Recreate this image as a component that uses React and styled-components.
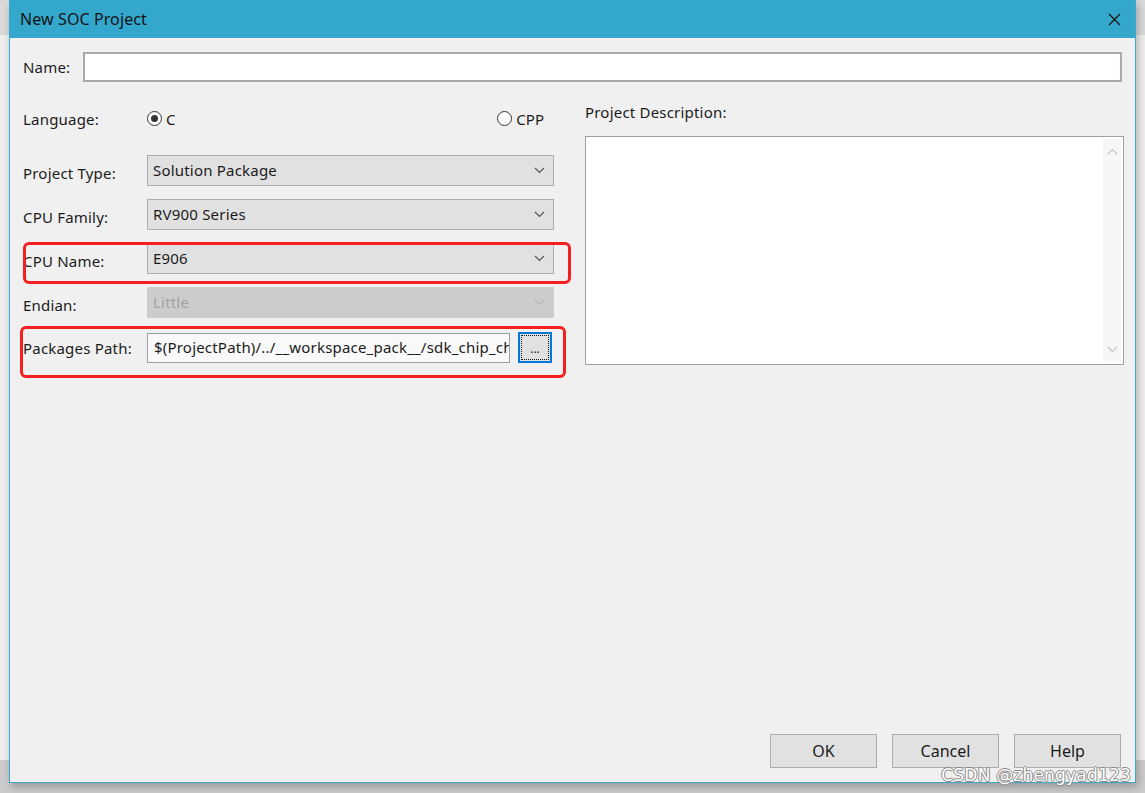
import React from "react";
import styled, { createGlobalStyle } from "styled-components";

const GlobalStyle = createGlobalStyle`
	html, body {
		margin: 0;
		padding: 0;
		background: #efefef;
	}
	body {
		font-family: "Noto Sans", "Open Sans", sans-serif;
		color: #1b1b1b;
	}
`;

// init constant
const selects = [
	{ label: "Project Type:", value: "Solution Package" },
	{ label: "CPU Family:", value: "RV900 Series" },
	{ label: "CPU Name:", value: "E906" },
	{ label: "Endian:", value: "Little", disabled: true },
];

// styled component
const Desktop = styled.div`
	position: relative;
	width: 1145px;
	height: 793px;
	box-sizing: border-box;
	padding: 0 9px 10px 9px;
	background: linear-gradient(
		to bottom,
		#d9d9d9 0,
		#d9d9d9 35px,
		#eeeeee 35px,
		#eeeeee 760px,
		#cbcbcb 760px
	);
	overflow: hidden;
`;

const Dialog = styled.div`
	width: 1127px;
	height: 783px;
	box-sizing: border-box;
	border: 1px solid #3ea8cc;
	border-top: none;
	background: #f0f0f0;
	display: flex;
	flex-direction: column;
	box-shadow: 2px 4px 8px rgba(0, 0, 0, 0.25);
`;

const TitleBar = styled.div`
	height: 38px;
	background: #33a7cc;
	display: flex;
	align-items: center;
	justify-content: space-between;
	padding: 0 14px 0 10px;
	flex-shrink: 0;
`;

const Title = styled.span`
	font-size: 16px;
	letter-spacing: 0.1px;
	color: #141414;
`;

const Body = styled.div`
	flex: 1;
	display: flex;
	flex-direction: column;
	padding: 14px 13px 14px 13px;
`;

const NameRow = styled.div`
	display: flex;
	align-items: center;
	gap: 13px;
	height: 30px;
`;

const Label = styled.span`
	font-size: 15px;
	letter-spacing: 0.2px;
	color: #1b1b1b;
	white-space: nowrap;
	padding-top: ${(p) => p.$shift || 0}px;
`;

const TextInput = styled.div`
	flex: 1;
	height: 30px;
	box-sizing: border-box;
	border: 2px solid #a9a9a9;
	background: #ffffff;
	font-size: 15px;
	letter-spacing: 0.2px;
	display: flex;
	align-items: center;
	padding: 0 5px;
	overflow: hidden;
	white-space: nowrap;
`;

const Columns = styled.div`
	display: flex;
	gap: 31px;
	margin-top: 21px;
`;

const LeftCol = styled.div`
	position: relative;
	width: 531px;
	display: flex;
	flex-direction: column;
	gap: 13px;
`;

const FieldRow = styled.div`
	display: grid;
	grid-template-columns: 124px 1fr;
	align-items: center;
	height: 31px;
	margin-bottom: ${(p) => p.$after || 0}px;
	margin-top: ${(p) => p.$before || 0}px;
`;

const RadioGroup = styled.div`
	display: flex;
	justify-content: space-between;
	align-items: center;
	padding-right: 10px;
`;

const RadioItem = styled.label`
	display: flex;
	align-items: center;
	gap: 4px;
	font-size: 15px;
`;

const RadioCircle = styled.span`
	width: 13px;
	height: 13px;
	border-radius: 50%;
	border: 1px solid #333;
	background: #fff;
	display: flex;
	align-items: center;
	justify-content: center;
	&::after {
		content: "";
		width: 7px;
		height: 7px;
		border-radius: 50%;
		background: ${(p) => (p.$checked ? "#333" : "transparent")};
	}
`;

const Select = styled.div`
	height: 31px;
	box-sizing: border-box;
	border: 1px solid ${(p) => (p.$disabled ? "#cccccc" : "#adadad")};
	background: ${(p) => (p.$disabled ? "#cccccc" : "#e1e1e1")};
	color: ${(p) => (p.$disabled ? "#a3a3a3" : "#1b1b1b")};
	font-size: 15px;
	letter-spacing: 0.2px;
	display: flex;
	align-items: center;
	justify-content: space-between;
	padding: 0 8px 2px 5px;

	svg {
		margin-top: 2px;
	}
`;

const PathBox = styled.div`
	display: flex;
	align-items: center;
	gap: 8px;
`;

const PathInput = styled(TextInput)`
	flex: none;
	width: 363px;
	border-width: 1px;
	border-color: #a0a0a0;
	background: #f9f9f9;
	padding: 0 6px 1px 6px;
`;

const BrowseButton = styled.div`
	width: 34px;
	height: 31px;
	box-sizing: border-box;
	border: 2px solid #0078d7;
	background: #e1e1e1;
	padding: 1px;
	display: flex;
	span {
		flex: 1;
		border: 1px dotted #111;
		display: flex;
		align-items: flex-end;
		justify-content: center;
		font-size: 12px;
		line-height: 16px;
		padding-bottom: 2px;
	}
`;

const Annotation = styled.div`
	position: absolute;
	left: ${(p) => p.$left}px;
	top: ${(p) => p.$top}px;
	width: ${(p) => p.$width}px;
	height: ${(p) => p.$height}px;
	box-sizing: border-box;
	border: 3px solid #f51f1f;
	border-radius: 6px;
	pointer-events: none;
`;

const RightCol = styled.div`
	flex: 1;
	display: flex;
	flex-direction: column;
	gap: 15px;
	margin-right: -2px;
`;

const DescLabel = styled.span`
	font-size: 15px;
	letter-spacing: 0.2px;
	line-height: 18px;
`;

const TextArea = styled.div`
	height: 229px;
	box-sizing: border-box;
	border: 1px solid #a0a0a0;
	background: #fff;
	display: flex;
	justify-content: flex-end;
	padding: 2px;
`;

const ScrollGutter = styled.div`
	width: 18px;
	background: #f6f6f6;
	display: flex;
	flex-direction: column;
	justify-content: space-between;
	align-items: center;
	padding: 9px 0;
`;

const Footer = styled.div`
	margin-top: auto;
	display: flex;
	justify-content: flex-end;
	gap: 15px;
	padding-right: 1px;
`;

const Button = styled.div`
	width: 107px;
	height: 34px;
	box-sizing: border-box;
	border: 1px solid #adadad;
	background: #e1e1e1;
	font-size: 16px;
	display: flex;
	align-items: center;
	justify-content: center;
`;

const Watermark = styled.div`
	position: absolute;
	right: 14px;
	bottom: 8px;
	font-family: "DejaVu Sans", "Noto Sans", sans-serif;
	font-size: 17px;
	color: #ffffff;
	text-shadow: -1px 0 #8a8a8a, 1px 0 #8a8a8a, 0 -1px #8a8a8a, 0 1px #8a8a8a;
	letter-spacing: 0.2px;
`;

const Chevron = ({ color = "#555", up }) => (
	<svg width="11" height="7" viewBox="0 0 11 7">
		<path
			d={up ? "M1 6 L5.5 1.5 L10 6" : "M1 1 L5.5 5.5 L10 1"}
			fill="none"
			stroke={color}
			strokeWidth="1.2"
		/>
	</svg>
);

const CloseIcon = () => (
	<svg width="13" height="13" viewBox="0 0 13 13">
		<path d="M1 1 L12 12 M12 1 L1 12" stroke="#111" strokeWidth="1.2" />
	</svg>
);

// react functional components
const App = () => {
	return (
		<>
			<GlobalStyle />
			<Desktop>
				<Dialog>
					<TitleBar>
						<Title>New SOC Project</Title>
						<CloseIcon />
					</TitleBar>
					<Body>
						<NameRow>
							<Label>Name:</Label>
							<TextInput />
						</NameRow>

						<Columns>
							<LeftCol>
								<FieldRow $after={8}>
									<Label>Language:</Label>
									<RadioGroup>
										<RadioItem>
											<RadioCircle $checked />C
										</RadioItem>
										<RadioItem>
											<RadioCircle />CPP
										</RadioItem>
									</RadioGroup>
								</FieldRow>

								{selects.map((s) => (
									<FieldRow key={s.label}>
										<Label $shift={4}>{s.label}</Label>
										<Select $disabled={s.disabled}>
											{s.value}
											<Chevron color={s.disabled ? "#b5b5b5" : "#555"} />
										</Select>
									</FieldRow>
								))}

								<FieldRow $before={1}>
									<Label $shift={1}>Packages Path:</Label>
									<PathBox>
										<PathInput>
											$(ProjectPath)/../__workspace_pack__/sdk_chip_ch
										</PathInput>
										<BrowseButton>
											<span>...</span>
										</BrowseButton>
									</PathBox>
								</FieldRow>

								<Annotation $left={0} $top={139} $width={548} $height={42} />
								<Annotation $left={-3} $top={223} $width={546} $height={52} />
							</LeftCol>

							<RightCol>
								<DescLabel>Project Description:</DescLabel>
								<TextArea>
									<ScrollGutter>
										<Chevron up color="#c4c4c4" />
										<Chevron color="#c4c4c4" />
									</ScrollGutter>
								</TextArea>
							</RightCol>
						</Columns>

						<Footer>
							<Button>OK</Button>
							<Button>Cancel</Button>
							<Button>Help</Button>
						</Footer>
					</Body>
				</Dialog>
				<Watermark>CSDN @zhengyad123</Watermark>
			</Desktop>
		</>
	);
};

export default App;
